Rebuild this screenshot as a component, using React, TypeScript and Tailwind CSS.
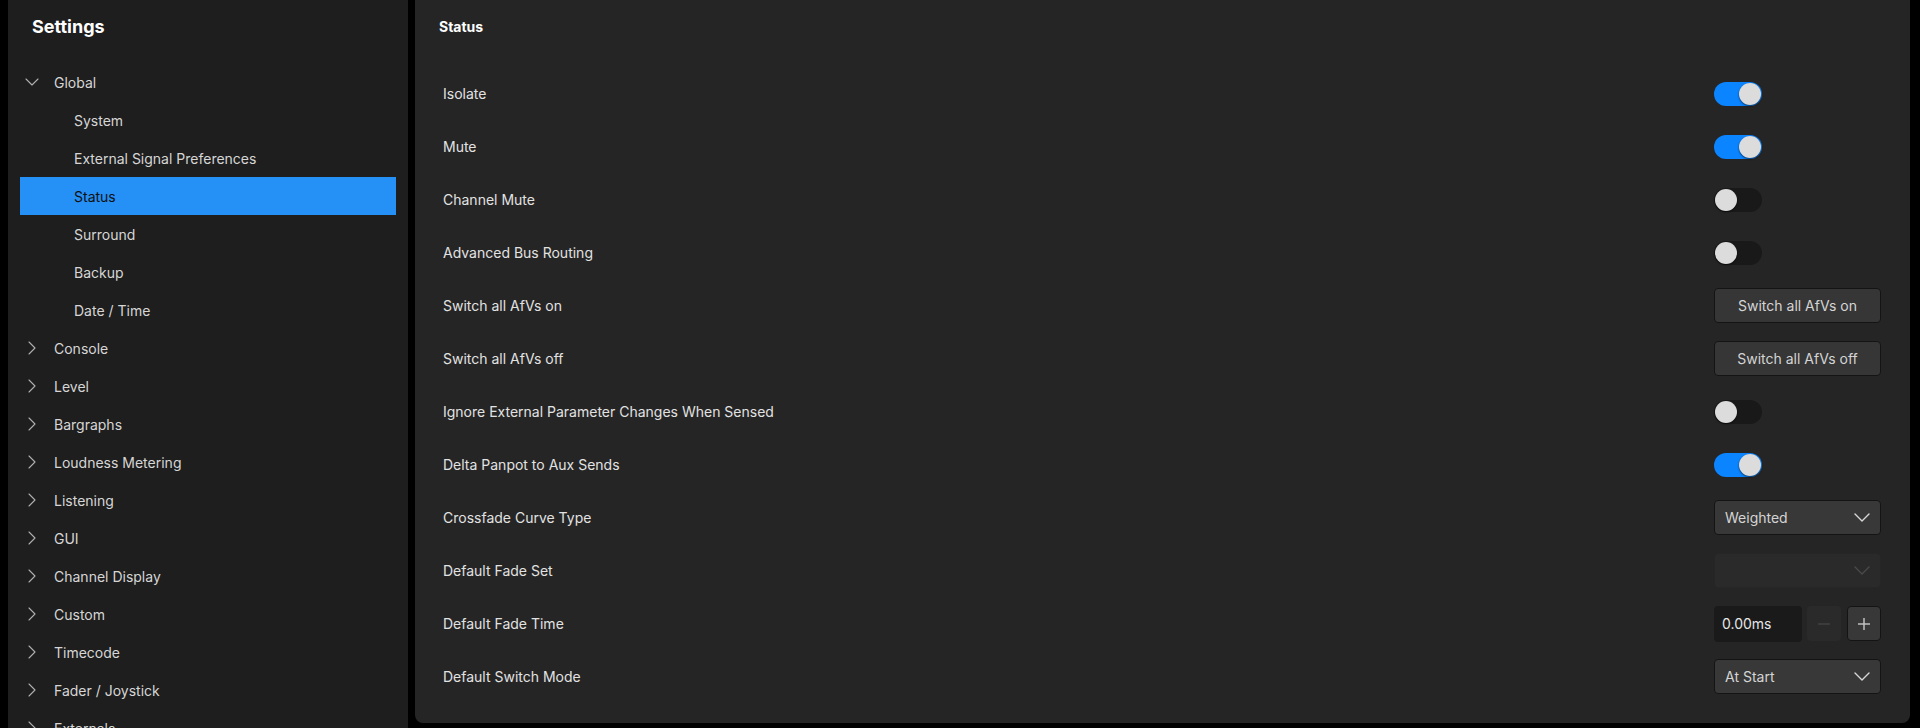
import React from "react";

const Chevron = ({ dir }: { dir: "down" | "right" }) => (
  <svg width="24" height="24" viewBox="0 0 24 24" fill="none" stroke="#b0b0b0" strokeWidth="1.1" strokeLinecap="round" strokeLinejoin="round">
    {dir === "down" ? <polyline points="6 9 12 15 18 9" /> : <polyline points="9 6 15 12 9 18" />}
  </svg>
);

const SelChevron = ({ faint }: { faint?: boolean }) => (
  <svg width="16" height="9" viewBox="0 0 16 9" fill="none" stroke={faint ? "#4a4a4a" : "#d8d8d8"} strokeWidth="1.4" strokeLinecap="round" strokeLinejoin="round">
    <polyline points="1 1 8 8 15 1" />
  </svg>
);

const Toggle = ({ on }: { on: boolean }) => (
  <div className={`relative w-[48px] h-[24px] rounded-full ${on ? "bg-[#0a84ff]" : "bg-[#191919]"}`}>
    <div
      className={`absolute top-[1px] w-[22px] h-[22px] rounded-full bg-[#dcdcdc] shadow-[0_1px_2px_rgba(0,0,0,0.6)] ${on ? "left-[25px]" : "left-[1px]"}`}
    />
  </div>
);

const Btn = ({ label }: { label: string }) => (
  <div className="w-[167px] h-[35px] rounded-[4px] bg-[#363636] border border-[#141414] flex items-center justify-center text-[14px] text-[#d4d4d4]">
    {label}
  </div>
);

const Select = ({ value, disabled }: { value?: string; disabled?: boolean }) => (
  <div
    className={`w-[167px] h-[35px] rounded-[4px] flex items-center justify-between pl-[10px] pr-[10px] text-[14px] ${
      disabled ? "bg-[#2a2a2a] border border-[#262626]" : "bg-[#383838] border border-[#141414] text-[#d4d4d4]"
    }`}
  >
    <span>{value}</span>
    <SelChevron faint={disabled} />
  </div>
);

const FadeTime = () => (
  <div className="w-[167px] flex items-center">
    <div className="w-[88px] h-[36px] rounded-[4px] bg-[#1a1a1a] flex items-center pl-[8px] text-[14px] text-[#e6e6e6]">0.00ms</div>
    <div className="ml-[5px] w-[34px] h-[35px] rounded-[4px] bg-[#2a2a2a] flex items-center justify-center">
      <svg width="14" height="14" viewBox="0 0 14 14" stroke="#444" strokeWidth="1.4"><line x1="1" y1="7" x2="13" y2="7" /></svg>
    </div>
    <div className="ml-[6px] w-[34px] h-[35px] rounded-[4px] bg-[#383838] border border-[#141414] flex items-center justify-center">
      <svg width="14" height="14" viewBox="0 0 14 14" stroke="#c8c8c8" strokeWidth="1.4"><line x1="1" y1="7" x2="13" y2="7" /><line x1="7" y1="1" x2="7" y2="13" /></svg>
    </div>
  </div>
);

type Row = { label: string; control: React.ReactNode };

const rows: Row[] = [
  { label: "Isolate", control: <Toggle on /> },
  { label: "Mute", control: <Toggle on /> },
  { label: "Channel Mute", control: <Toggle on={false} /> },
  { label: "Advanced Bus Routing", control: <Toggle on={false} /> },
  { label: "Switch all AfVs on", control: <Btn label="Switch all AfVs on" /> },
  { label: "Switch all AfVs off", control: <Btn label="Switch all AfVs off" /> },
  { label: "Ignore External Parameter Changes When Sensed", control: <Toggle on={false} /> },
  { label: "Delta Panpot to Aux Sends", control: <Toggle on /> },
  { label: "Crossfade Curve Type", control: <Select value="Weighted" /> },
  { label: "Default Fade Set", control: <Select disabled /> },
  { label: "Default Fade Time", control: <FadeTime /> },
  { label: "Default Switch Mode", control: <Select value="At Start" /> },
];

const subItems = ["System", "External Signal Preferences", "Status", "Surround", "Backup", "Date / Time"];
const groups = ["Console", "Level", "Bargraphs", "Loudness Metering", "Listening", "GUI", "Channel Display", "Custom", "Timecode", "Fader / Joystick", "Externals"];

export default function App() {
  return (
    <div
      className="w-[1920px] h-[728px] bg-black flex overflow-hidden"
      style={{ fontFamily: "Inter, 'Noto Sans', sans-serif" }}
    >
      <aside className="ml-[8px] w-[400px] h-[728px] shrink-0 bg-[#1e1e1e] flex flex-col overflow-hidden">
        <div className="shrink-0 pl-[24px] pt-[16px] h-[63px] text-[18px] leading-[22px] font-bold text-white">Settings</div>
        <div className="shrink-0 px-[12px] flex flex-col">
          <div className="shrink-0 h-[38px] flex items-center text-[14px] text-[#d6d6d6]">
            <Chevron dir="down" />
            <span className="ml-[10px]">Global</span>
          </div>
          {subItems.map((s) => (
            <div
              key={s}
              className={`shrink-0 h-[38px] flex items-center pl-[54px] text-[14px] ${
                s === "Status" ? "bg-[#2590f5] text-[#111]" : "text-[#d6d6d6]"
              }`}
            >
              {s}
            </div>
          ))}
          {groups.map((g) => (
            <div key={g} className="shrink-0 h-[38px] flex items-center text-[14px] text-[#d6d6d6]">
              <Chevron dir="right" />
              <span className="ml-[10px]">{g}</span>
            </div>
          ))}
        </div>
      </aside>
      <main className="ml-[7px] mr-[10px] w-[1495px] h-[723px] shrink-0 bg-[#252525] rounded-b-[8px] flex flex-col">
        <div className="shrink-0 pl-[24px] pt-[18px] text-[14px] leading-[18px] font-bold text-white">Status</div>
        <div className="shrink-0 mt-[31px] pl-[28px] pr-[29px] flex flex-col">
          {rows.map((r) => (
            <div key={r.label} className="shrink-0 h-[53px] flex items-center justify-between">
              <span className="text-[14px] text-[#e2e2e2]">{r.label}</span>
              <div className="w-[167px] flex items-center">{r.control}</div>
            </div>
          ))}
        </div>
      </main>
    </div>
  );
}
